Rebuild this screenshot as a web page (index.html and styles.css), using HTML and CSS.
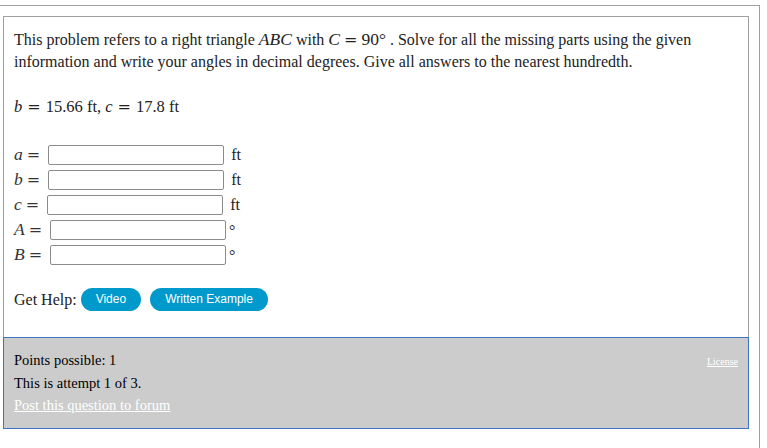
FILE: index.html
```html
<!DOCTYPE html>
<html>
<head>
<meta charset="utf-8">
<link rel="stylesheet" href="styles.css">
</head>
<body>
<div class="outer">
  <div class="card">
    <div class="question">
      <p class="intro">This problem refers to a right triangle <span class="m"><i>ABC</i></span> with <span class="m"><i>C</i><span class="eq">=</span>90°</span> . Solve for all the missing parts using the given<br>information and write your angles in decimal degrees. Give all answers to the nearest hundredth.</p>
      <p class="given"><span class="m mg"><i>b</i><span class="eq">=</span>15.66 ft, <i>c</i><span class="eq">=</span>17.8 ft</span></p>
      <div class="answers">
        <div class="row"><span class="lbl m"><i>a</i><span class="eq">=</span></span><input class="box" type="text"><span class="unit">ft</span></div>
        <div class="row"><span class="lbl m"><i>b</i><span class="eq">=</span></span><input class="box" type="text"><span class="unit">ft</span></div>
        <div class="row"><span class="lbl m"><i>c</i><span class="eq">=</span></span><input class="box" type="text"><span class="unit">ft</span></div>
        <div class="row"><span class="lbl m"><i>A</i><span class="eq">=</span></span><input class="box" type="text"><span class="unit deg-unit">°</span></div>
        <div class="row"><span class="lbl m"><i>B</i><span class="eq">=</span></span><input class="box" type="text"><span class="unit deg-unit">°</span></div>
      </div>
      <div class="help">
        <span class="help-label">Get Help:</span>
        <button class="pill">Video</button>
        <button class="pill">Written Example</button>
      </div>
    </div>
    <div class="footer">
      <a class="license" href="#">License</a>
      <p class="fline">Points possible: 1</p>
      <p class="fline">This is attempt 1 of 3.</p>
      <p class="fline"><a class="forum" href="#">Post this question to forum</a></p>
    </div>
  </div>
</div>
</body>
</html>
```

FILE: styles.css
```css
html, body {
  margin: 0;
  padding: 0;
  overflow: hidden;
  background: #ffffff;
}

.outer {
  box-sizing: border-box;
  margin-top: 5px;
  width: 760px;
  height: 443px;
  border: 1px solid #a0a0a0;
  border-left: none;
  border-bottom: none;
  padding: 10px 10px 0 3px;
}

.card {
  width: 746px;
  font-family: "Liberation Serif", "Times New Roman", serif;
  color: #222222;
}

.question {
  border: 1px solid #a0a0a0;
  border-bottom: none;
  padding: 12px 10px 26px 10px;
  font-size: 16px;
}

.intro {
  margin: 0;
  line-height: 22px;
}

.m {
  font-size: 17.5px;
  line-height: 1;
}

.m i {
  font-style: italic;
}

.mg {
  font-size: 16.5px;
}

.mg .eq {
  padding: 0 5px;
}

.eq {
  font-family: "DejaVu Serif", serif;
  font-size: 16px;
  padding: 0 4px;
}

.given {
  margin: 23px 0 0 0;
  line-height: 22px;
}

.answers {
  margin-top: 24px;
  display: flex;
  flex-direction: column;
}

.row {
  display: flex;
  align-items: center;
  height: 25px;
}

.lbl {
  line-height: 20px;
  margin-right: 4px;
  color: #333333;
}

.box {
  box-sizing: border-box;
  width: 176px;
  height: 20px;
  margin: 0;
  border: 1px solid #8c8c8c;
  border-radius: 2px;
  background: #ffffff;
  padding: 0 3px;
}

.unit {
  margin-left: 7px;
  font-size: 16px;
  line-height: 20px;
}

.deg-unit {
  margin-left: 3px;
  align-self: flex-start;
  line-height: 20px;
  margin-top: 4px;
}

.help {
  margin-top: 21px;
  display: flex;
  align-items: center;
  height: 23px;
}

.help-label {
  margin-right: 4px;
}

.pill {
  height: 23px;
  margin: 0 9px 0 0;
  padding: 0 15px;
  border: none;
  border-radius: 12px;
  background: #0099cc;
  color: #ffffff;
  font-family: "Liberation Sans", Arial, sans-serif;
  font-size: 12px;
  line-height: 23px;
}

.footer {
  border: 1px solid #3d72c4;
  background: #cccccc;
  padding: 11px 10px 11px 10px;
  font-size: 14.5px;
  color: #000000;
}

.fline {
  margin: 0;
  line-height: 22.5px;
}

.license {
  float: right;
  font-size: 10px;
  line-height: 26px;
  color: #ffffff;
}

.forum {
  color: #ffffff;
}
```
